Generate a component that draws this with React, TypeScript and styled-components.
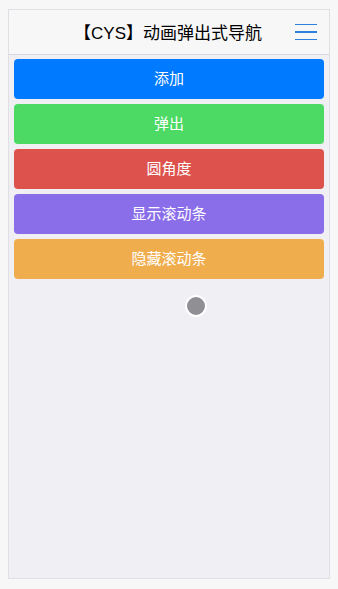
import styled, { createGlobalStyle } from "styled-components";

const GlobalStyle = createGlobalStyle`
    html, body {
        margin: 0;
        background: #f7f7f7;
    }
    body {
        padding: 9px 8px 10px 8px;
        font-family: "Liberation Sans", "Noto Sans CJK SC", sans-serif;
    }
`;

const Frame = styled.div`
    width: 322px;
    height: 570px;
    box-sizing: border-box;
    border: 1px solid #e0e0e4;
    background: #efeff4;
    display: flex;
    flex-direction: column;
`;

const Header = styled.header`
    height: 45px;
    box-sizing: border-box;
    background: #f7f7f7;
    border-bottom: 1px solid #d8d8dc;
    display: flex;
    align-items: center;
    padding: 0 10px 0 14px;
`;

const Title = styled.h1`
    flex: 1;
    margin: 0 0 2px 0;
    text-align: center;
    font-size: 17px;
    font-weight: 400;
    color: #000;
    padding-left: 18px;
`;

const MenuIcon = styled.button`
    width: 24px;
    height: 24px;
    padding: 0;
    border: 0;
    background: none;
    display: flex;
    flex-direction: column;
    justify-content: center;
    gap: 6px;
    cursor: pointer;
`;

const MenuLine = styled.span`
    display: block;
    height: 1.5px;
    width: 22px;
    background: #2f80dd;
`;

const Content = styled.main`
    flex: 1;
    padding: 4px 5px;
    display: flex;
    flex-direction: column;
    gap: 5px;
`;

const ActionButton = styled.button<{ $bg: string }>`
    height: 40px;
    padding: 0 0 3px 0;
    border: 0;
    border-radius: 4px;
    background: ${(p) => p.$bg};
    color: #fff;
    font-family: inherit;
    font-size: 15px;
    cursor: pointer;
`;

const Dot = styled.div`
    width: 18px;
    height: 18px;
    border-radius: 50%;
    background: #8f8f94;
    border: 2px solid #fff;
    margin: 11px 0 0 171px;
`;

const actions = [
    { label: "添加", color: "#007aff" },
    { label: "弹出", color: "#4cd964" },
    { label: "圆角度", color: "#dd524d" },
    { label: "显示滚动条", color: "#8a6de9" },
    { label: "隐藏滚动条", color: "#f0ad4e" },
];

const App = () => {
    return (
        <>
            <GlobalStyle />
            <Frame>
                <Header>
                    <Title>【CYS】动画弹出式导航</Title>
                    <MenuIcon aria-label="menu">
                        <MenuLine />
                        <MenuLine />
                        <MenuLine />
                    </MenuIcon>
                </Header>
                <Content>
                    {actions.map((a) => (
                        <ActionButton key={a.label} $bg={a.color}>
                            {a.label}
                        </ActionButton>
                    ))}
                    <Dot />
                </Content>
            </Frame>
        </>
    );
};

export default App;
